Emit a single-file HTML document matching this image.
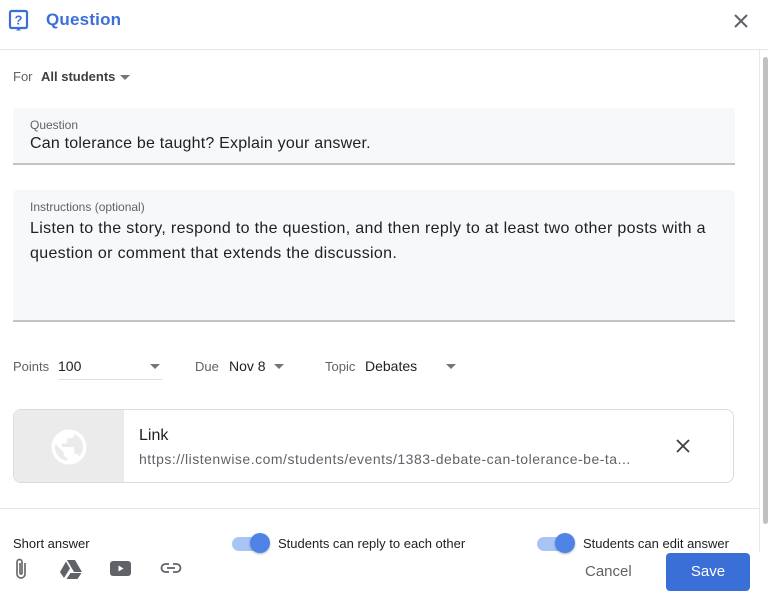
<!DOCTYPE html>
<html><head><meta charset="utf-8"><style>
*{box-sizing:border-box;margin:0;padding:0}
body{width:768px;height:604px;background:#fff;font-family:"Liberation Sans",Arial,sans-serif;color:#202124;position:relative;overflow:hidden}
.a{position:absolute}
.lbl{font-size:12px;color:#5f6368}
.tri{width:0;height:0;border-left:5px solid transparent;border-right:5px solid transparent;border-top:5px solid #757575;position:absolute}
</style></head><body>
<svg class="a" style="left:8px;top:9px" width="22" height="24" viewBox="0 0 22 24"><rect x="2" y="2" width="17" height="17" rx="1.5" fill="none" stroke="#3b6fd8" stroke-width="2.2"/><path d="M8 21.5 L10.5 19 L13 21.5Z" fill="#3b6fd8"/><text x="10.5" y="15.5" text-anchor="middle" font-size="13" font-weight="bold" fill="#3b6fd8" font-family="Liberation Sans">?</text></svg>
<div class="a" style="left:46px;top:10px;font-size:17px;color:#3b6fd8;font-weight:bold;letter-spacing:0.2px">Question</div>
<svg class="a" style="left:733px;top:13px" width="16" height="16" viewBox="0 0 16 16"><path d="M2 2L14 14M14 2L2 14" stroke="#5f6368" stroke-width="2"/></svg>
<div class="a" style="left:0;top:49px;width:768px;height:1px;background:#e5e5e5"></div>
<div class="a" style="left:759px;top:50px;width:1px;height:502px;background:#e8e8e8"></div>
<div class="a" style="left:763px;top:57px;width:5px;height:467px;background:#c1c1c1;border-radius:3px"></div>

<div class="a" style="left:13px;top:69px;font-size:13px;color:#5f6368">For</div>
<div class="a" style="left:41px;top:69px;font-size:13px;font-weight:bold;color:#3c4043">All students</div>
<div class="tri" style="left:120px;top:75px"></div>

<div class="a" style="left:13px;top:108px;width:722px;height:57px;background:#f7f8fa;border-bottom:2px solid #c4c4c4;border-radius:4px 4px 0 0"></div>
<div class="a lbl" style="left:30px;top:118px">Question</div>
<div class="a" style="left:30px;top:135px;font-size:16px;letter-spacing:0.2px">Can tolerance be taught? Explain your answer.</div>

<div class="a" style="left:13px;top:190px;width:722px;height:132px;background:#f7f8fa;border-bottom:2px solid #c4c4c4;border-radius:4px 4px 0 0"></div>
<div class="a lbl" style="left:30px;top:200px">Instructions (optional)</div>
<div class="a" style="left:30px;top:216px;font-size:16px;line-height:25px;width:705px;letter-spacing:0.33px">Listen to the story, respond to the question, and then reply to at least two other posts with a question or comment that extends the discussion.</div>

<div class="a" style="left:13px;top:359px;font-size:13px;color:#5f6368">Points</div>
<div class="a" style="left:58px;top:358px;font-size:14px">100</div>
<div class="tri" style="left:150px;top:364px"></div>
<div class="a" style="left:58px;top:379px;width:104px;height:1px;background:#e0e0e0"></div>
<div class="a" style="left:195px;top:359px;font-size:13px;color:#5f6368">Due</div>
<div class="a" style="left:229px;top:358px;font-size:14px">Nov 8</div>
<div class="tri" style="left:274px;top:364px"></div>
<div class="a" style="left:325px;top:359px;font-size:13px;color:#5f6368">Topic</div>
<div class="a" style="left:365px;top:358px;font-size:14px">Debates</div>
<div class="tri" style="left:446px;top:364px"></div>

<div class="a" style="left:13px;top:409px;width:721px;height:74px;border:1px solid #dadce0;border-radius:8px;overflow:hidden">
<div style="position:absolute;left:0;top:0;width:110px;height:74px;background:#ebebeb"></div>
<svg style="position:absolute;left:34px;top:16px" width="42" height="42" viewBox="0 0 24 24"><path fill="#fff" d="M12 2C6.48 2 2 6.480 2 12s4.48 10 10 10 10-4.48 10-10S17.52 2 12 2zm-1 17.93c-3.95-.49-7-3.85-7-7.93 0-.62.08-1.21.21-1.79L9 15v1c0 1.1.9 2 2 2v1.93zm6.9-2.54c-.26-.81-1-1.39-1.9-1.39h-1v-3c0-.55-.45-1-1-1H8v-2h2c.55 0 1-.45 1-1V7h2c1.1 0 2-.9 2-2v-.41c2.93 1.19 5 4.06 5 7.41 0 2.08-.8 3.970-2.1 5.39z"/></svg>
</div>
<div class="a" style="left:139px;top:427px;font-size:16px">Link</div>
<div class="a" style="left:139px;top:451px;font-size:14px;color:#5f6368;letter-spacing:0.5px">https://listenwise.com/students/events/1383-debate-can-tolerance-be-ta...</div>
<svg class="a" style="left:676px;top:439px" width="14" height="14" viewBox="0 0 14 14"><path d="M1 1L13 13M13 1L1 13" stroke="#3c4043" stroke-width="1.8"/></svg>

<div class="a" style="left:0;top:508px;width:760px;height:1px;background:#e5e5e5"></div>

<div class="a" style="left:13px;top:536px;font-size:13px">Short answer</div>
<div class="a" style="left:232px;top:537px;width:36px;height:14px;border-radius:7px;background:#a8c4f5"></div>
<div class="a" style="left:250px;top:533px;width:20px;height:20px;border-radius:50%;background:#4f84e6;box-shadow:0 1px 2px rgba(0,0,0,.3)"></div>
<div class="a" style="left:278px;top:536px;font-size:13px">Students can reply to each other</div>
<div class="a" style="left:537px;top:537px;width:36px;height:14px;border-radius:7px;background:#a8c4f5"></div>
<div class="a" style="left:555px;top:533px;width:20px;height:20px;border-radius:50%;background:#4f84e6;box-shadow:0 1px 2px rgba(0,0,0,.3)"></div>
<div class="a" style="left:583px;top:536px;font-size:13px">Students can edit answer</div>

<svg class="a" style="left:12px;top:557px" width="18" height="24" viewBox="0 0 18 24"><path d="M13 6v11a4 4 0 0 1-8 0V5a2.5 2.5 0 0 1 5 0V16a1 1 0 0 1-2 0V6" fill="none" stroke="#6b6b6b" stroke-width="1.7"/></svg>
<svg class="a" style="left:59px;top:559px" width="24" height="20" viewBox="0 0 24 20"><path d="M8 1h8l7 12h-8z M7 2.5l4 7L5 19 1 13z M11.5 14h11l-4 6h-11z" fill="#5f6368"/></svg>
<svg class="a" style="left:110px;top:561px" width="21" height="15" viewBox="0 0 21 15"><rect x="0" y="0" width="21" height="15" rx="3" fill="#5f6368"/><path d="M8.5 4.5v6l5-3z" fill="#fff"/></svg>
<svg class="a" style="left:160px;top:562px" width="22" height="12" viewBox="0 0 22 12"><path d="M9 2H5.5a4 4 0 0 0 0 8H9M13 2h3.5a4 4 0 0 1 0 8H13M7 6h8" fill="none" stroke="#5f6368" stroke-width="1.8"/></svg>

<div class="a" style="left:585px;top:563px;font-size:15px;color:#5f6368">Cancel</div>
<div class="a" style="left:666px;top:553px;width:84px;height:38px;background:#3b6fd8;border-radius:4px;color:#fff;font-size:15px;text-align:center;line-height:38px">Save</div>
</body></html>
